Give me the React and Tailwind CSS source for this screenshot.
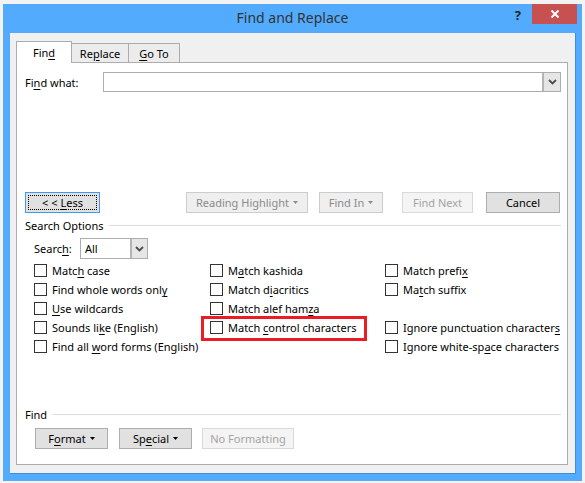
import React from "react";

const U = ({ children }) => (
  <span className="underline underline-offset-[2px] decoration-[1px]">{children}</span>
);

const Tri = () => (
  <svg width="5" height="3" viewBox="0 0 5 3" className="ml-[4px] shrink-0">
    <path d="M0 0h5L2.5 3z" fill="currentColor" />
  </svg>
);

const Chevron = () => (
  <svg width="9" height="6" viewBox="0 0 9 6">
    <path d="M1 1l3.5 3.5L8 1" stroke="#4d4d4d" strokeWidth="1.8" fill="none" />
  </svg>
);

function Check({ children }) {
  return (
    <div className="flex items-center h-[19px]">
      <span className="w-[13px] h-[13px] border border-[#333333] bg-white shrink-0" />
      <span className="ml-[5px] text-black whitespace-nowrap">{children}</span>
    </div>
  );
}

export default function App() {
  return (
    <div
      className="w-[585px] h-[483px] bg-[#f3f3f3] overflow-hidden text-[11px] leading-none text-black"
      style={{ fontFamily: '"Noto Sans", "Segoe UI", sans-serif' }}
    >
      <div className="ml-[3px] mt-[4px] w-[579px] h-[477px] bg-[#52abfd] flex flex-col">
        {/* title bar */}
        <div className="h-[29px] grid grid-cols-[1fr_auto_1fr] shrink-0">
          <div />
          <div className="pt-[7px] text-[14px] text-[#333333]">Find and Replace</div>
          <div className="flex justify-end items-start">
            <span className="mt-[5px] mr-[11px] text-[13px] font-bold text-[#222]">?</span>
            <div className="w-[45px] h-[20px] mr-[5px] bg-[#c75050] flex items-center justify-center">
              <svg width="10" height="10" viewBox="0 0 10 10">
                <path d="M1.5 1.5l7 7M8.5 1.5l-7 7" stroke="white" strokeWidth="2" />
              </svg>
            </div>
          </div>
        </div>

        {/* inner client area */}
        <div className="ml-[7px] mr-[6px] mb-[7px] flex-1 bg-[#f0f0f0] border-r border-b border-[#3e8fda] pl-[6px] pt-[8px]">
          {/* tabs */}
          <div className="flex items-end h-[21px]">
            <div className="relative z-10 w-[56px] h-[22px] -mb-px bg-white border border-b-0 border-[#acacac] flex items-center justify-center">
              Fin<U>d</U>
            </div>
            <div className="w-[57px] h-[19px] bg-[#ececec] border border-b-0 border-l-0 border-[#acacac] flex items-center justify-center">
              Re<U>p</U>lace
            </div>
            <div className="w-[51px] h-[19px] bg-[#ececec] border border-b-0 border-l-0 border-[#acacac] flex items-center justify-center">
              <U>G</U>o To
            </div>
          </div>

          {/* panel */}
          <div className="w-[552px] h-[403px] bg-white border border-[#acacac] flex flex-col">
            {/* find what */}
            <div className="mt-[9px] pl-[8px] pr-[6px] flex items-center h-[20px]">
              <div className="w-[78px]">
                Fi<U>n</U>d what:
              </div>
              <div className="flex-1 h-[20px] border border-[#abadb3] bg-white flex justify-end">
                <div className="w-[18px] h-full bg-[#e6e6e6] border-l-2 border-[#b4b4b4] flex items-center justify-center">
                  <Chevron />
                </div>
              </div>
            </div>

            {/* buttons row */}
            <div className="mt-[100px] pl-[8px] flex h-[21px]">
              <div className="w-[75px] h-full border border-[#3c9cf5] bg-[#e1e1e1] p-[2px]">
                <div className="w-full h-full border border-dotted border-black flex items-center justify-center">
                  &lt; &lt; <span className="ml-[3px]"><U>L</U>ess</span>
                </div>
              </div>
              <div className="ml-[86px] w-[122px] h-full border border-[#cccccc] bg-[#efefef] text-[#8a8a8a] flex items-center justify-center">
                Reading Highlight <Tri />
              </div>
              <div className="ml-[11px] w-[64px] h-full border border-[#cccccc] bg-[#efefef] text-[#8a8a8a] flex items-center justify-center">
                Find In <Tri />
              </div>
              <div className="ml-[19px] w-[71px] h-full border border-[#d9d9d9] bg-[#f4f4f4] text-[#a3a3a3] flex items-center justify-center">
                Find Next
              </div>
              <div className="ml-[13px] w-[74px] h-full border border-[#adadad] bg-[#e1e1e1] flex items-center justify-center">
                Cancel
              </div>
            </div>

            {/* search options heading */}
            <div className="mt-[4px] pl-[8px] pr-[6px] h-[16px] flex items-center">
              <span className="whitespace-nowrap">Search Options</span>
              <div className="ml-[5px] flex-1 h-px bg-[#dcdcdc]" />
            </div>

            {/* search select */}
            <div className="mt-[5px] pl-[17px] h-[21px] flex items-center">
              <div className="w-[46px]">
                Searc<U>h</U>:
              </div>
              <div className="w-[68px] h-[21px] border border-[#abadb3] bg-white flex">
                <div className="flex-1 pl-[4px] flex items-center">All</div>
                <div className="w-[17px] h-full bg-[#e6e6e6] border-l-2 border-[#b4b4b4] flex items-center justify-center">
                  <Chevron />
                </div>
              </div>
            </div>

            {/* checkboxes */}
            <div className="mt-[2px] pl-[17px] grid grid-cols-[176px_175px_1fr]">
              <div className="flex flex-col">
                <Check>Matc<U>h</U> case</Check>
                <Check>Find whole words onl<U>y</U></Check>
                <Check><U>U</U>se wildcards</Check>
                <Check>Sounds li<U>k</U>e (English)</Check>
                <Check>Find all <U>w</U>ord forms (English)</Check>
              </div>
              <div className="flex flex-col">
                <Check>M<U>a</U>tch kashida</Check>
                <Check>Match d<U>i</U>acritics</Check>
                <Check>Match alef ham<U>z</U>a</Check>
                <div className="relative">
                  <Check>Match <U>c</U>ontrol characters</Check>
                  <div className="absolute left-[-9px] top-[-2px] w-[166px] h-[25px] border-[3px] border-[#ec1c24]" />
                </div>
              </div>
              <div className="flex flex-col">
                <Check>Match prefi<U>x</U></Check>
                <Check>Ma<U>t</U>ch suffix</Check>
                <div className="h-[19px]" />
                <Check>Ignore punctuation character<U>s</U></Check>
                <Check>Ignore white-sp<U>a</U>ce characters</Check>
              </div>
            </div>

            {/* find heading */}
            <div className="mt-[50px] pl-[8px] pr-[6px] h-[16px] flex items-center">
              <span>Find</span>
              <div className="ml-[5px] flex-1 h-px bg-[#dcdcdc]" />
            </div>

            {/* bottom buttons */}
            <div className="mt-[6px] pl-[18px] flex h-[21px]">
              <div className="w-[73px] h-full border border-[#adadad] bg-[#e1e1e1] flex items-center justify-center">
                F<U>o</U>rmat <Tri />
              </div>
              <div className="ml-[11px] w-[73px] h-full border border-[#adadad] bg-[#e1e1e1] flex items-center justify-center">
                Sp<U>e</U>cial <Tri />
              </div>
              <div className="ml-[10px] w-[92px] h-full border border-[#d9d9d9] bg-[#f4f4f4] text-[#a3a3a3] flex items-center justify-center">
                No Formatting
              </div>
            </div>
          </div>
        </div>
      </div>
    </div>
  );
}
